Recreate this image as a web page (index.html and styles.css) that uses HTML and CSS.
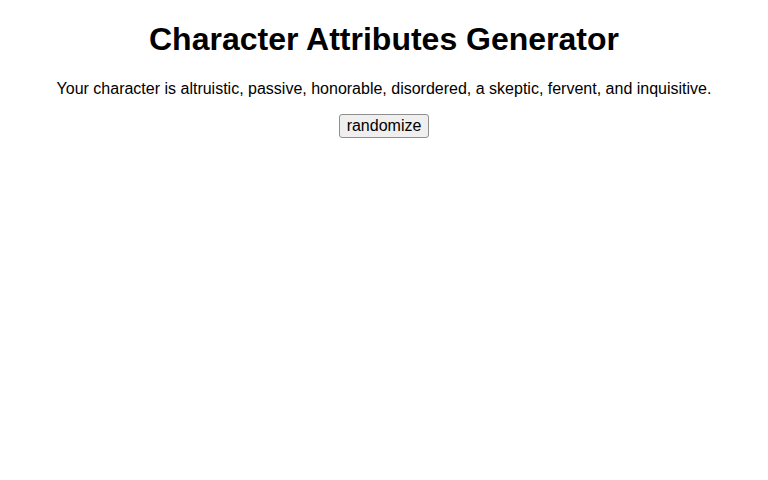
FILE: index.html
```html
<!DOCTYPE html>
<html lang="en">
<head>
    <meta charset="UTF-8">
    <meta name="viewport" content="width=device-width, initial-scale=1.0">
    <title>Character Attributes Generator</title>
    <link rel="stylesheet" href="styles.css">
</head>
<body>
    <div class="container">
        <h1>Character Attributes Generator</h1>
        <p id="attributes">Your character is altruistic, passive, honorable, disordered, a skeptic, fervent, and inquisitive.</p>
        <button id="randomize">randomize</button>
    </div>
</body>
</html>
```

FILE: styles.css
```css
body {
    font-family: "Liberation Sans", Arial, sans-serif;
    margin: 0;
    text-align: center;
}
h1 {
    font-size: 32px;
    margin: 21px 0 22px;
}
p {
    font-size: 16px;
    margin: 16px 0;
}
button {
    font-family: "Liberation Sans", Arial, sans-serif;
    font-size: 16px;
    padding: 2px 7px;
    background-color: #efefef;
    border: 1px solid #8f8f8f;
    border-radius: 3px;
    color: #000;
}
```
